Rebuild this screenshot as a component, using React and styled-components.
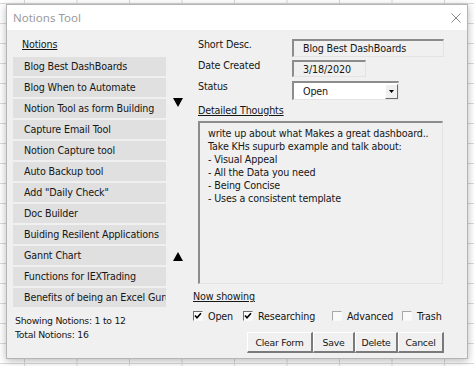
import React from 'react';
import styled, { createGlobalStyle } from 'styled-components';

const GlobalStyle = createGlobalStyle`
  html, body {
    margin: 0;
    padding: 0;
  }
  body {
    width: 474px;
    height: 366px;
    overflow: hidden;
    background-color: #ffffff;
    background-image:
      linear-gradient(to right, #d9d9d9 1px, transparent 1px),
      linear-gradient(to bottom, #d9d9d9 1px, transparent 1px);
    background-size: 52.5px 20px;
    background-position: 24px 3px;
    font-family: 'DejaVu Sans', Tahoma, sans-serif;
  }
`;

const Dialog = styled.div`
  margin: 4px 0 0 6px;
  width: 462px;
  height: 355px;
  box-sizing: border-box;
  border: 1px solid #b4b4b4;
  background: #f0f0f0;
  box-shadow: 0 2px 8px rgba(0, 0, 0, 0.28);
  display: flex;
  flex-direction: column;
`;

const TitleBar = styled.div`
  height: 25px;
  background: #ffffff;
  display: flex;
  align-items: center;
  justify-content: space-between;
  padding: 0 6px 0 6px;
`;

const Title = styled.span`
  font-family: 'Noto Sans', 'Open Sans', sans-serif;
  font-size: 11.5px;
  color: #9a9a9a;
`;

const CloseIcon = () => (
  <svg width="10" height="10" viewBox="0 0 10 10">
    <path d="M0.5 0.5 L9.5 9.5 M9.5 0.5 L0.5 9.5" stroke="#8a8a8a" strokeWidth="1" fill="none" />
  </svg>
);

const Body = styled.div`
  flex: 1;
  display: flex;
  padding-left: 6px;
  font-size: 9.6px;
  letter-spacing: -0.15px;
  color: #161616;
`;

const LeftPanel = styled.div`
  width: 153px;
  display: flex;
  flex-direction: column;
`;

const Underlined = styled.div`
  text-decoration: underline;
  height: 14px;
  line-height: 14px;
  padding-left: ${(p) => p.$indent || 0}px;
  margin-top: ${(p) => p.$top || 0}px;
`;

const List = styled.div`
  margin-top: 5px;
  display: flex;
  flex-direction: column;
  gap: 2px;
`;

const ListItem = styled.div`
  height: 19px;
  line-height: 19px;
  background: #e0e0e0;
  padding-left: 11px;
  white-space: nowrap;
  overflow: hidden;
`;

const Stats = styled.div`
  margin-top: 7px;
  padding-left: 2px;
  font-size: 9.3px;
  line-height: 14px;
  letter-spacing: -0.25px;
`;

const ArrowColumn = styled.div`
  width: 26px;
  display: flex;
  flex-direction: column;
  align-items: center;
  padding-top: 68px;
  box-sizing: border-box;
  padding-right: 2px;
`;

const ArrowGap = styled.div`
  height: 145px;
`;

const Triangle = ({ up }) => (
  <svg width="10" height="9" viewBox="0 0 10 9">
    <path d={up ? 'M5 0 L10 9 L0 9 Z' : 'M0 0 L10 0 L5 9 Z'} fill="#000" />
  </svg>
);

const RightPanel = styled.div`
  flex: 1;
  display: flex;
  flex-direction: column;
  padding-top: 9px;
`;

const FieldRow = styled.div`
  display: flex;
  align-items: flex-start;
  padding-left: 6px;
  margin-bottom: ${(p) => p.$gap}px;
`;

const Label = styled.div`
  width: 94px;
  line-height: 14px;
  margin-top: -1px;
`;

const Field = styled.div`
  width: ${(p) => p.$w}px;
  height: ${(p) => p.$h}px;
  box-sizing: border-box;
  border-top: 2px solid #8c8c8c;
  border-left: 2px solid #8c8c8c;
  border-right: 1px solid #e3e3e3;
  border-bottom: 1px solid #e3e3e3;
  background: ${(p) => (p.$white ? '#ffffff' : '#f0f0f0')};
  padding-left: 9px;
  display: flex;
  align-items: center;
  justify-content: space-between;
`;

const DropButton = styled.div`
  width: 13px;
  height: 15px;
  box-sizing: border-box;
  background: #f0f0f0;
  border-top: 1px solid #fff;
  border-left: 1px solid #fff;
  border-right: 1px solid #6a6a6a;
  border-bottom: 1px solid #6a6a6a;
  display: flex;
  align-items: center;
  justify-content: center;
`;

const SmallArrow = () => (
  <svg width="5" height="3" viewBox="0 0 5 3">
    <path d="M0 0 L5 0 L2.5 3 Z" fill="#000" />
  </svg>
);

const Thoughts = styled.div`
  margin: 3px 0 0 6px;
  width: 245px;
  height: 163px;
  box-sizing: border-box;
  border-top: 2px solid #8c8c8c;
  border-left: 2px solid #8c8c8c;
  border-right: 1px solid #e3e3e3;
  border-bottom: 1px solid #e3e3e3;
  padding: 4px 0 0 8px;
  line-height: 13px;
  white-space: pre;
`;

const CheckRow = styled.div`
  display: flex;
  align-items: center;
  margin-top: 5px;
  padding-left: 1px;
  height: 14px;
`;

const CheckItem = styled.label`
  display: flex;
  align-items: center;
  gap: 5px;
  width: ${(p) => p.$w}px;
`;

const Box = styled.span`
  width: 10px;
  height: 10px;
  box-sizing: border-box;
  border-top: 1px solid ${(p) => (p.$on ? '#6e6e6e' : '#a8a8a8')};
  border-left: 1px solid ${(p) => (p.$on ? '#6e6e6e' : '#a8a8a8')};
  border-right: 1px solid #f8f8f8;
  border-bottom: 1px solid #f8f8f8;
  background: #fafafa;
  display: flex;
  align-items: center;
  justify-content: center;
`;

const Tick = () => (
  <svg width="8" height="8" viewBox="0 0 8 8">
    <path d="M1 3.5 L3 5.8 L7 1.3" stroke="#000" strokeWidth="1.6" fill="none" />
  </svg>
);

const ButtonRow = styled.div`
  display: flex;
  margin: 9px 0 0 55px;
`;

const Button = styled.button`
  height: 21px;
  width: ${(p) => p.$w}px;
  box-sizing: border-box;
  padding: 0;
  font-family: 'DejaVu Sans', Tahoma, sans-serif;
  font-size: 9.3px;
  letter-spacing: -0.25px;
  color: #161616;
  background: #f0f0f0;
  border-top: 1px solid #ffffff;
  border-left: 1px solid #ffffff;
  border-right: 2px solid #7a7a7a;
  border-bottom: 2px solid #7a7a7a;
`;

const notions = [
  'Blog Best DashBoards',
  'Blog When to Automate',
  'Notion Tool as form Building',
  'Capture Email Tool',
  'Notion Capture tool',
  'Auto Backup tool',
  'Add "Daily Check"',
  'Doc Builder',
  'Buiding Resilent Applications',
  'Gannt Chart',
  'Functions for IEXTrading',
  'Benefits of being an Excel Guru',
];

const thoughts = `write up about what Makes a great dashboard..
Take KHs supurb example and talk about:
- Visual Appeal
- All the Data you need
- Being Concise
- Uses a consistent template`;

const checks = [
  { label: 'Open', on: true, w: 50 },
  { label: 'Researching', on: true, w: 89 },
  { label: 'Advanced', on: false, w: 70 },
  { label: 'Trash', on: false, w: 50 },
];

const buttons = [
  { label: 'Clear Form', w: 66 },
  { label: 'Save', w: 42 },
  { label: 'Delete', w: 43 },
  { label: 'Cancel', w: 46 },
];

export default function App() {
  return (
    <>
      <GlobalStyle />
      <Dialog>
        <TitleBar>
          <Title>Notions Tool</Title>
          <CloseIcon />
        </TitleBar>
        <Body>
          <LeftPanel>
            <Underlined $indent={9} $top={8}>Notions</Underlined>
            <List>
              {notions.map((n) => (
                <ListItem key={n}>{n}</ListItem>
              ))}
            </List>
            <Stats>
              Showing Notions: 1 to 12
              <br />
              Total Notions: 16
            </Stats>
          </LeftPanel>
          <ArrowColumn>
            <Triangle />
            <ArrowGap />
            <Triangle up />
          </ArrowColumn>
          <RightPanel>
            <FieldRow $gap={3}>
              <Label>Short Desc.</Label>
              <Field $w={152} $h={18}>Blog Best DashBoards</Field>
            </FieldRow>
            <FieldRow $gap={4}>
              <Label>Date Created</Label>
              <Field $w={74} $h={17}>3/18/2020</Field>
            </FieldRow>
            <FieldRow $gap={4}>
              <Label>Status</Label>
              <Field $w={107} $h={19} $white>
                Open
                <DropButton>
                  <SmallArrow />
                </DropButton>
              </Field>
            </FieldRow>
            <Underlined $indent={6}>Detailed Thoughts</Underlined>
            <Thoughts>{thoughts}</Thoughts>
            <Underlined $indent={1} $top={6}>Now showing</Underlined>
            <CheckRow>
              {checks.map((c) => (
                <CheckItem key={c.label} $w={c.w}>
                  <Box $on={c.on}>{c.on && <Tick />}</Box>
                  {c.label}
                </CheckItem>
              ))}
            </CheckRow>
            <ButtonRow>
              {buttons.map((b) => (
                <Button key={b.label} $w={b.w}>
                  {b.label}
                </Button>
              ))}
            </ButtonRow>
          </RightPanel>
        </Body>
      </Dialog>
    </>
  );
}
